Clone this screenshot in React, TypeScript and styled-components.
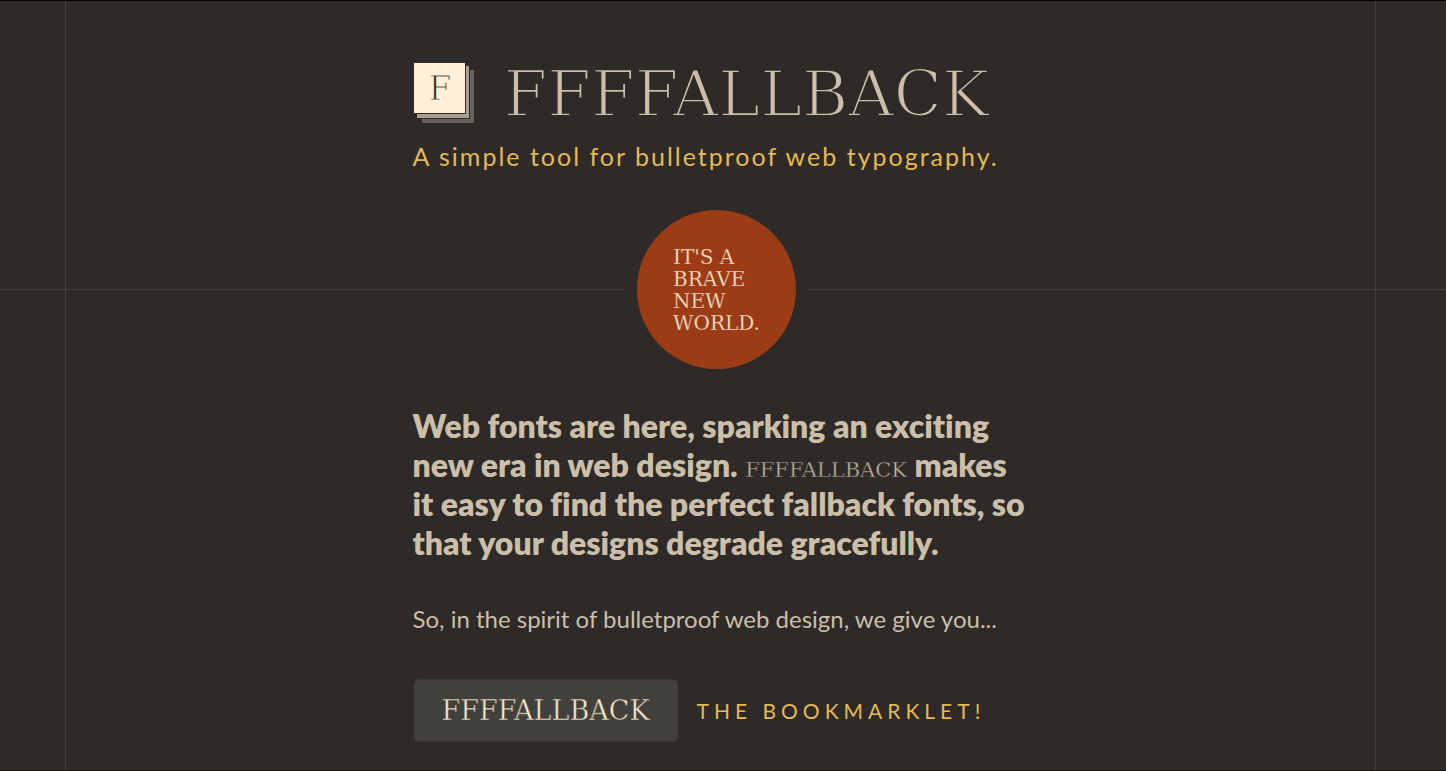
import React from "react";
import styled, { createGlobalStyle } from "styled-components";

const GlobalStyle = createGlobalStyle`
  body {
    margin: 0;
    background: #2e2a27;
    color: #cbbfa9;
    font-family: Lato, "Liberation Sans", sans-serif;
  }
`;

const slab = `"DejaVu Serif", "Liberation Serif", serif`;

const Page = styled.div`
  min-height: 100vh;
  box-sizing: border-box;
  border-top: 1px solid #000;
  border-bottom: 1px solid #161412;
  display: flex;
  overflow-x: hidden;
`;

const Frame = styled.div`
  flex: 1;
  min-width: 0;
  margin: 0 70px 0 65px;
  border: solid #43403c;
  border-width: 0 1px;
`;

const Column = styled.div`
  width: 620px;
  margin-left: calc(50% - 308px);
`;

const Header = styled.header`
  padding-top: 60px;
`;

const Brand = styled.div`
  display: flex;
  gap: 29px;
  height: 72px;
`;

const Logo = styled.svg`
  flex: none;
  width: 62px;
  height: 64px;
`;

const Title = styled.h1`
  margin: 0;
  font-family: ${slab};
  font-weight: 400;
  font-size: 63px;
  line-height: 68px;
  white-space: nowrap;
  -webkit-text-stroke: 2px #2e2a27;
`;

const Tagline = styled.p`
  margin: 5px 0 0;
  color: #e5b955;
  font-size: 25px;
  line-height: 36px;
  letter-spacing: 2px;
  white-space: nowrap;
`;

const BadgeRow = styled.div`
  display: grid;
  grid-template-columns: calc(50% - 99px) auto 1fr;
  align-items: center;
  column-gap: 13px;
  margin: 36px -71px 0 -66px;
`;

const Rule = styled.span`
  height: 1px;
  background: #43403c;
`;

const Badge = styled.p`
  box-sizing: border-box;
  width: 159px;
  height: 159px;
  margin: 0;
  padding: 36px 0 0 36px;
  border-radius: 50%;
  background: #9b3c17;
  color: #ffedd0;
  font-family: ${slab};
  font-size: 20px;
  line-height: 22px;
  white-space: nowrap;
  -webkit-text-stroke: 1px #9b3c1750;
`;

const Intro = styled.p`
  margin: 37px 0 0;
  font-size: 32px;
  font-weight: 800;
  line-height: 39px;
  white-space: nowrap;
  font-variant-ligatures: none;
`;

const Name = styled.span`
  font-family: ${slab};
  font-size: 21px;
  font-weight: 400;
  line-height: 22px;
  -webkit-text-stroke: 1px #2e2a2780;
`;

const Lead = styled.p`
  margin: 41px 0 0;
  font-size: 24px;
  line-height: 32px;
  white-space: nowrap;
`;

const Action = styled.div`
  display: flex;
  align-items: center;
  gap: 19px;
  margin: 44px 0 28px 1px;
`;

const Bookmarklet = styled.a`
  box-sizing: border-box;
  width: 264px;
  height: 63px;
  border-radius: 5px;
  background: #41403b;
  box-shadow: inset 0 -1px #383632, inset 0 1px #383632;
  color: #ffedd0;
  font-family: ${slab};
  font-size: 27px;
  line-height: 64px;
  text-align: center;
  text-decoration: none;
  -webkit-text-stroke: 1px #41403b90;
`;

const Label = styled.span`
  color: #e5b955;
  font-size: 21px;
  line-height: 28px;
  letter-spacing: 5px;
  white-space: nowrap;
`;

export default function App() {
  return (
    <Page>
      <GlobalStyle />
      <Frame>
        <Column>
          <Header>
            <Brand>
              <Logo viewBox="0 0 62 64" aria-hidden="true">
                <rect x="9" y="9" width="52" height="53" fill="#67625a" />
                <rect x="4" y="5" width="53" height="53" fill="#2e2a27" />
                <rect x="4" y="5" width="52" height="52" fill="#aaa08d" />
                <rect x="1" y="2" width="52" height="51" fill="#2e2a27" />
                <rect x="1" y="2" width="51" height="50" fill="#fff0d7" />
                <text
                  x="27"
                  y="39"
                  textAnchor="middle"
                  fontFamily="DejaVu Serif"
                  fontSize="33"
                  fill="#2e2a27"
                  stroke="#fff0d7"
                  strokeWidth="1"
                >
                  F
                </text>
              </Logo>
              <Title>FFFFALLBACK</Title>
            </Brand>
            <Tagline>A simple tool for bulletproof web typography.</Tagline>
          </Header>
        </Column>
        <BadgeRow>
          <Rule />
          <Badge>
            IT'S A<br />
            BRAVE<br />
            NEW<br />
            WORLD.
          </Badge>
          <Rule />
        </BadgeRow>
        <Column>
          <Intro>
            Web fonts are here, sparking an exciting
            <br />
            new era in web design. <Name>FFFFALLBACK</Name> makes
            <br />
            it easy to find the perfect fallback fonts, so
            <br />
            that your designs degrade gracefully.
          </Intro>
          <Lead>So, in the spirit of bulletproof web design, we give you...</Lead>
          <Action>
            <Bookmarklet href="#bookmarklet">FFFFALLBACK</Bookmarklet>
            <Label>THE BOOKMARKLET!</Label>
          </Action>
        </Column>
      </Frame>
    </Page>
  );
}
